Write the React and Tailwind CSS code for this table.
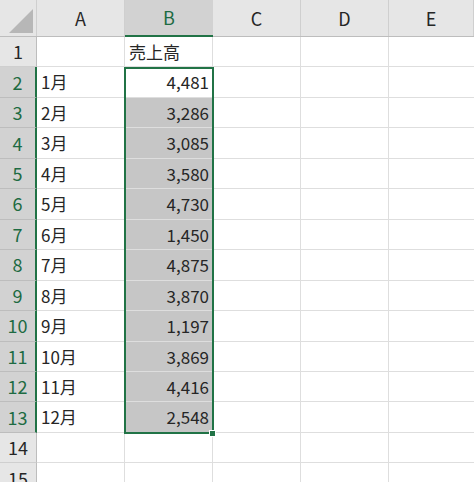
import React from 'react';

const rows = [
  ['', '売上高'],
  ['1月', '4,481'],
  ['2月', '3,286'],
  ['3月', '3,085'],
  ['4月', '3,580'],
  ['5月', '4,730'],
  ['6月', '1,450'],
  ['7月', '4,875'],
  ['8月', '3,870'],
  ['9月', '1,197'],
  ['10月', '3,869'],
  ['11月', '4,416'],
  ['12月', '2,548'],
  ['', ''],
  ['', ''],
];

const cols = ['A', 'B', 'C', 'D', 'E'];
const widths = ['w-[88px]', 'w-[88px]', 'w-[88px]', 'w-[88px]', 'flex-1'];

const App = () => {
  return (
    <div
      className="relative w-[474px] h-[482px] overflow-hidden bg-white text-[#262626]"
      style={{ fontFamily: '"Noto Sans CJK JP", "Noto Sans", sans-serif' }}
    >
      {/* column headers */}
      <div className="flex h-[37px] bg-[#e6e6e6] border-b border-[#bdbdbd]">
        <div className="w-[37px] shrink-0 border-r border-[#cfcfcf] relative">
          <div className="absolute right-[3px] bottom-[3px] w-0 h-0 border-l-[24px] border-l-transparent border-b-[24px] border-b-[#b7b7b7]" />
        </div>
        {cols.map((c, i) => (
          <div
            key={c}
            className={`${widths[i]} shrink-0 flex items-center justify-center text-[18px] ${
              c === 'B'
                ? 'bg-[#d2d2d2] text-[#1d6b42] border-b-2 border-[#217346] -mb-px'
                : 'border-r border-[#cfcfcf]'
            }`}
          >
            {c}
          </div>
        ))}
      </div>

      {/* rows */}
      {rows.map(([a, b], r) => {
        const n = r + 1;
        const sel = n >= 2 && n <= 13;
        return (
          <div key={n} className="flex h-[30.46px]">
            <div
              className={`w-[37px] shrink-0 flex items-center justify-center text-[18px] border-b ${
                sel
                  ? 'bg-[#d2d2d2] text-[#1d6b42] border-[#bdbdbd] border-r-2 border-r-[#217346]'
                  : 'bg-[#e6e6e6] border-[#cfcfcf] border-r border-r-[#bdbdbd]'
              }`}
            >
              {n}
            </div>
            <div className="w-[88px] shrink-0 border-r border-b border-[#dedede] flex items-center pl-[4px] text-[17px]">
              {a}
            </div>
            <div
              className={`w-[88px] shrink-0 border-r border-b border-[#dedede] flex items-center text-[17px] ${
                n === 1 ? 'justify-start pl-[4px]' : 'justify-end pr-[3px]'
              } ${sel && n !== 2 ? 'bg-[#c6c6c6]' : ''}`}
            >
              {b}
            </div>
            <div className="w-[88px] shrink-0 border-r border-b border-[#dedede]" />
            <div className="w-[88px] shrink-0 border-r border-b border-[#dedede]" />
            <div className="flex-1 border-b border-[#dedede]" />
          </div>
        );
      })}

      {/* selection B2:B13 */}
      <div className="absolute left-[124px] top-[66.5px] w-[89.5px] h-[367px] border-2 border-[#217346] pointer-events-none" />
      <div className="absolute left-[209px] top-[430px] w-[7px] h-[7px] bg-[#217346] border border-white" />
    </div>
  );
};

export default App;
